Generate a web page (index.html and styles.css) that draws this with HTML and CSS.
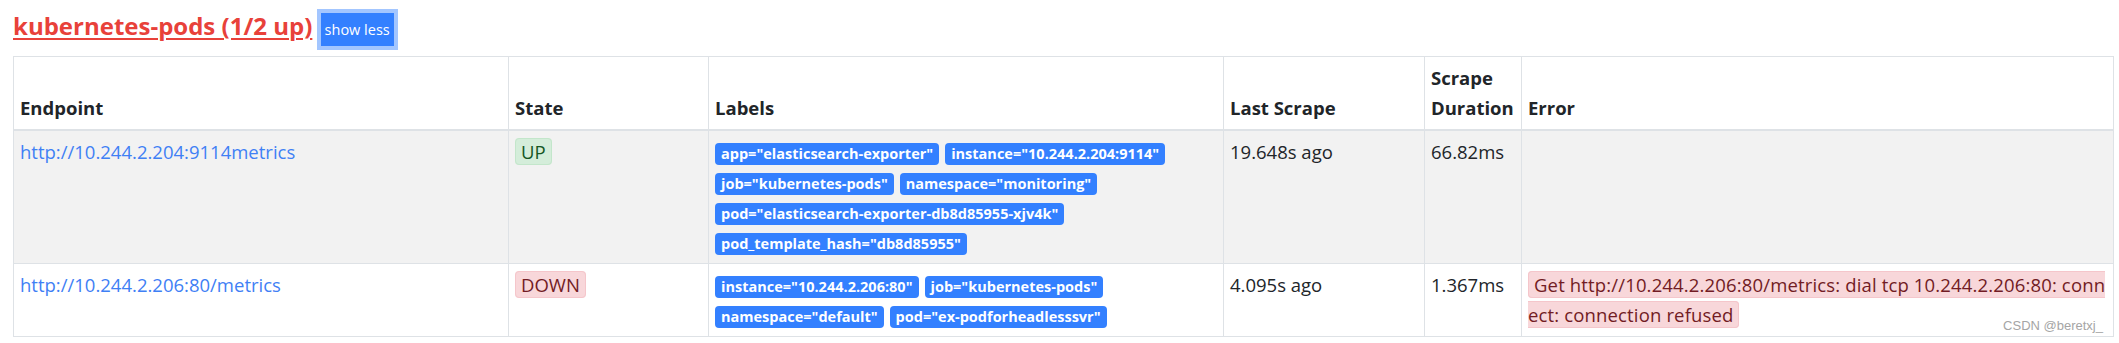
FILE: index.html
```html
<!DOCTYPE html>
<html>
<head>
<meta charset="utf-8">
<title>Targets</title>
<link rel="stylesheet" href="styles.css">
</head>
<body>
<div class="page">
  <h2 class="job-title"><a class="job-link" href="#job-kubernetes-pods">kubernetes-pods (1/2 up)</a> <button class="btn-show" type="button">show less</button></h2>
  <table class="targets">
    <thead>
      <tr>
        <th class="col-endpoint">Endpoint</th>
        <th class="col-state">State</th>
        <th class="col-labels">Labels</th>
        <th class="col-last">Last Scrape</th>
        <th class="col-dur">Scrape Duration</th>
        <th class="col-err">Error</th>
      </tr>
    </thead>
    <tbody>
      <tr class="row-odd">
        <td><a class="endpoint" href="#">http://10.244.2.204:9114metrics</a></td>
        <td><span class="state state-up">UP</span></td>
        <td class="labels"><span class="badge">app="elasticsearch-exporter"</span><span class="badge">instance="10.244.2.204:9114"</span><span class="badge">job="kubernetes-pods"</span><span class="badge">namespace="monitoring"</span><span class="badge">pod="elasticsearch-exporter-db8d85955-xjv4k"</span><span class="badge">pod_template_hash="db8d85955"</span></td>
        <td>19.648s ago</td>
        <td>66.82ms</td>
        <td></td>
      </tr>
      <tr>
        <td><a class="endpoint" href="#">http://10.244.2.206:80/metrics</a></td>
        <td><span class="state state-down">DOWN</span></td>
        <td class="labels"><span class="badge">instance="10.244.2.206:80"</span><span class="badge">job="kubernetes-pods"</span><span class="badge">namespace="default"</span><span class="badge">pod="ex-podforheadlesssvr"</span></td>
        <td>4.095s ago</td>
        <td>1.367ms</td>
        <td><span class="error">Get http://10.244.2.206:80/metrics: dial tcp 10.244.2.206:80: connect: connection refused</span></td>
      </tr>
    </tbody>
  </table>
  <div class="watermark">CSDN @beretxj_</div>
</div>
</body>
</html>
```
FILE: styles.css
```css
* { box-sizing: border-box; }

html, body {
  margin: 0;
  padding: 0;
  background: #ffffff;
}

body {
  font-family: "Open Sans", "Noto Sans", sans-serif;
  font-size: 18.5px;
  line-height: 30px;
  color: #212529;
}

.page {
  position: relative;
  width: 2119px;
  height: 343px;
  padding: 12px 5px 0 13px;
}

.job-title {
  margin: 0 0 10px 0;
  font-size: 24px;
  line-height: 1.2;
  font-weight: 700;
}

.job-link {
  color: #e8413a;
  text-decoration: underline;
  text-decoration-thickness: 2px;
  text-underline-offset: 3px;
}

.btn-show {
  display: inline-block;
  margin-left: 2px;
  font-family: "Open Sans", "Noto Sans", sans-serif;
  font-size: 14.5px;
  font-weight: 400;
  line-height: 23px;
  padding: 4px 3px;
  color: #ffffff;
  background: #3380ff;
  border: 1px solid #3380ff;
  border-radius: 0;
  box-shadow: 0 0 0 4px rgba(51, 128, 255, 0.45);
  vertical-align: baseline;
}

.targets {
  width: 2101px;
  table-layout: fixed;
  border-collapse: collapse;
}

.targets th,
.targets td {
  border: 1px solid #dee2e6;
  padding: 6px 6px;
  text-align: left;
}

.targets th {
  vertical-align: bottom;
  font-weight: 700;
  border-bottom: 2px solid #dee2e6;
}

.targets td {
  vertical-align: top;
}

.col-endpoint { width: 495px; }
.col-state { width: 200px; }
.col-labels { width: 515px; }
.col-last { width: 201px; }
.col-dur { width: 97px; }

.row-odd td {
  background: #f2f2f2;
}

.endpoint {
  color: #3f80f5;
  text-decoration: none;
}

.state,
.error {
  border: 1px solid transparent;
  border-radius: 4px;
  padding: 0 5px;
}

.state-up {
  background: #d4edda;
  border-color: #c3e6cb;
  color: #155724;
}

.state-down,
.error {
  background: #f8d7da;
  border-color: #f5c6cb;
  color: #721c24;
}

.error {
  word-break: break-all;
  letter-spacing: 0.15px;
}

.badge {
  display: inline-block;
  margin-right: 6px;
  padding: 4px 6px;
  font-size: 14.5px;
  line-height: 14px;
  font-weight: 700;
  color: #ffffff;
  background: #3380ff;
  border-radius: 4px;
  white-space: nowrap;
}

.watermark {
  position: absolute;
  right: 16px;
  top: 318px;
  font-family: "Liberation Sans", Arial, sans-serif;
  font-size: 13px;
  line-height: 15px;
  color: #a5a5a5;
}
```
